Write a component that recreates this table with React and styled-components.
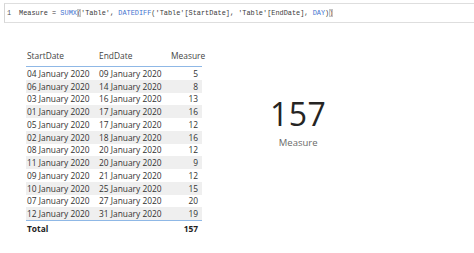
import React from 'react'
import styled, { createGlobalStyle } from 'styled-components'

const GlobalStyle = createGlobalStyle`
  html, body {
    margin: 0;
    padding: 0;
    background: #fff;
  }
  body {
    font-family: 'Open Sans', 'Liberation Sans', sans-serif;
    width: 474px;
    height: 253px;
    overflow: hidden;
  }
`

const FormulaBar = styled.div`
  display: flex;
  align-items: center;
  height: 18px;
  margin: 3px 0 0 4px;
  border-top: 1px solid #dedede;
  border-bottom: 1px solid #dedede;
  border-left: 1px solid #d6d6d6;
  font-family: 'Liberation Mono', 'DejaVu Sans Mono', monospace;
  font-size: 6.9px;
  color: #3b3b3b;
  white-space: pre;
`

const LineNo = styled.span`
  width: 12px;
  padding-left: 2px;
  color: #555;
`

const Kw = styled.span`
  color: #3f73cf;
`

const Match = styled.span`
  outline: 1px solid #c4c4c4;
  outline-offset: -1px;
  background: #f4f4f4;
`

const Canvas = styled.div`
  display: flex;
  align-items: flex-start;
  padding: 27px 0 0 26px;
`

const Table = styled.div`
  width: 176px;
  font-size: 8.4px;
  color: #333;
  white-space: nowrap;
`

const HeaderRow = styled.div`
  display: grid;
  grid-template-columns: 72px 72px 1fr;
  height: 17px;
  align-items: start;
  padding: 0 4px 0 1px;
  box-sizing: border-box;
  color: #444;
  border-bottom: 1.5px solid #8fb8e6;
`

const Row = styled.div`
  display: grid;
  grid-template-columns: 72px 72px 1fr;
  align-items: center;
  height: 12.75px;
  padding: 0 4px 0 1px;
  background: ${p => (p.$shaded ? '#efefef' : 'transparent')};
`

const TotalRow = styled(Row)`
  height: 14px;
  font-weight: 700;
  color: #222;
  border-top: 1.5px solid #8fb8e6;
`

const Num = styled.span`
  text-align: right;
`

const Card = styled.div`
  display: flex;
  flex-direction: column;
  align-items: center;
  margin: 44px 0 0 68px;
`

const BigValue = styled.div`
  font-size: 32px;
  line-height: 40px;
  letter-spacing: 0.5px;
  color: #252423;
`

const Label = styled.div`
  font-size: 9.5px;
  color: #6b6a69;
  margin-top: 2px;
`

const rows = [
  ['04 January 2020', '09 January 2020', 5],
  ['06 January 2020', '14 January 2020', 8],
  ['03 January 2020', '16 January 2020', 13],
  ['01 January 2020', '17 January 2020', 16],
  ['05 January 2020', '17 January 2020', 12],
  ['02 January 2020', '18 January 2020', 16],
  ['08 January 2020', '20 January 2020', 12],
  ['11 January 2020', '20 January 2020', 9],
  ['09 January 2020', '21 January 2020', 12],
  ['10 January 2020', '25 January 2020', 15],
  ['07 January 2020', '27 January 2020', 20],
  ['12 January 2020', '31 January 2020', 19]
]

export default function App () {
  const total = rows.reduce((s, r) => s + r[2], 0)

  return (
    <>
      <GlobalStyle />
      <FormulaBar>
        <LineNo>1</LineNo>
        <span>Measure = <Kw>SUMX</Kw><Match>(</Match>'Table', <Kw>DATEDIFF</Kw>('Table'[StartDate], 'Table'[EndDate], <Kw>DAY</Kw>)<Match>)</Match></span>
      </FormulaBar>
      <Canvas>
        <Table>
          <HeaderRow>
            <span>StartDate</span>
            <span>EndDate</span>
            <Num>Measure</Num>
          </HeaderRow>
          {rows.map((r, i) => (
            <Row key={i} $shaded={i % 2 === 1}>
              <span>{r[0]}</span>
              <span>{r[1]}</span>
              <Num>{r[2]}</Num>
            </Row>
          ))}
          <TotalRow>
            <span>Total</span>
            <span />
            <Num>{total}</Num>
          </TotalRow>
        </Table>
        <Card>
          <BigValue>{total}</BigValue>
          <Label>Measure</Label>
        </Card>
      </Canvas>
    </>
  )
}
